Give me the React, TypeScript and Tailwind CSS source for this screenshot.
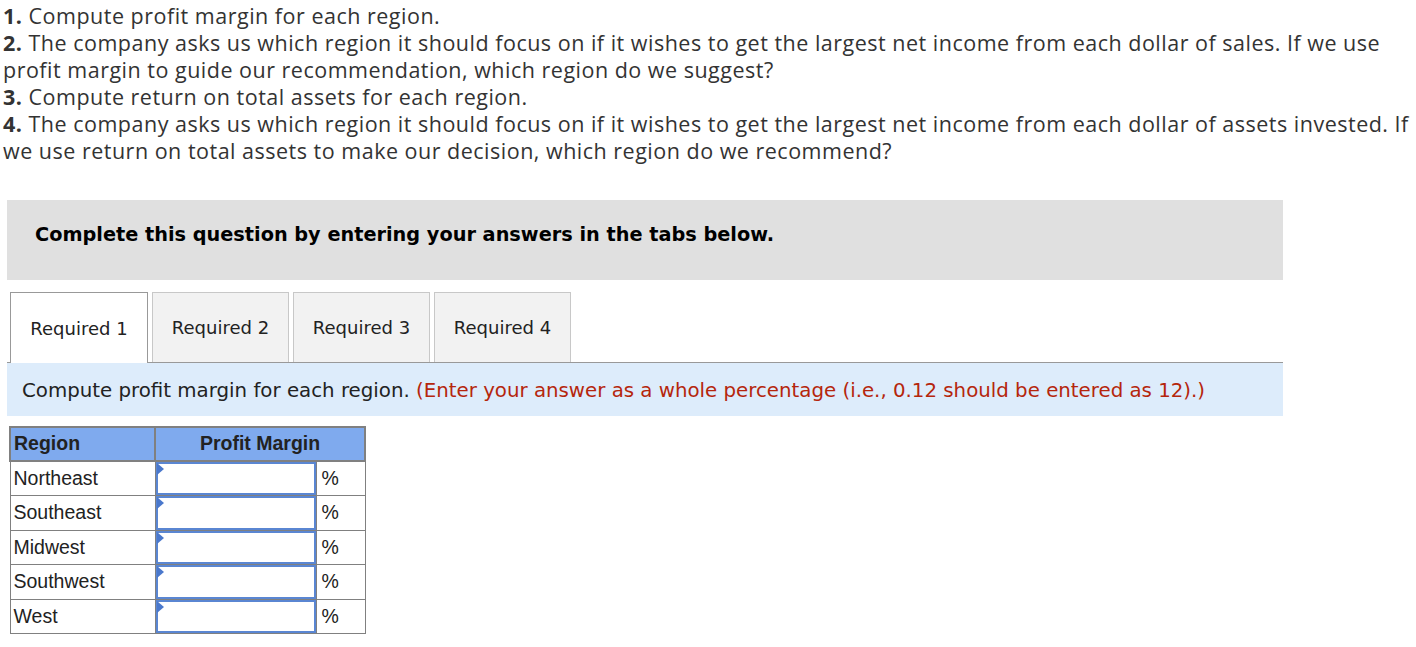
import React from "react";

const rows = ["Northeast", "Southeast", "Midwest", "Southwest", "West"];
const tabs = ["Required 1", "Required 2", "Required 3", "Required 4"];

export default function App() {
  return (
    <div className="w-[1416px] h-[647px] bg-white overflow-hidden">
      <div
        className="w-[1416px] pl-[3px] pt-[2px] text-[21.5px] tracking-[0.5px] leading-[27px] text-[#333]"
        style={{ fontFamily: '"Open Sans", sans-serif' }}
      >
        <div>
          <b>1.</b> Compute profit margin for each region.
        </div>
        <div>
          <b>2.</b> The company asks us which region it should focus on if it wishes to get the largest net income from each dollar of sales. If we use profit margin to guide our recommendation, which region do we suggest?
        </div>
        <div>
          <b>3.</b> Compute return on total assets for each region.
        </div>
        <div>
          <b>4.</b> The company asks us which region it should focus on if it wishes to get the largest net income from each dollar of assets invested. If we use return on total assets to make our decision, which region do we recommend?
        </div>
      </div>

      <div className="ml-[7px] w-[1276px] mt-[36px]" style={{ fontFamily: '"DejaVu Sans", Verdana, sans-serif' }}>
        <div className="h-[80px] bg-[#e0e0e0] flex items-center pl-[28px] pb-[10px] text-[19.3px] font-bold text-black">
          Complete this question by entering your answers in the tabs below.
        </div>

        <div className="mt-[12px] flex gap-[4px] pl-[3px] border-b border-[#999] h-[71px]">
          {tabs.map((t, i) => (
            <div
              key={t}
              className={
                i === 0
                  ? "w-[138px] h-[71px] bg-white border border-b-0 border-[#999] flex items-center justify-center text-[18px] text-[#222]"
                  : "w-[137px] h-[70px] bg-[#f2f2f2] border border-b-0 border-[#c8c8c8] flex items-center justify-center text-[18px] text-[#222]"
              }
            >
              {t}
            </div>
          ))}
        </div>

        <div className="h-[53px] bg-[#ddecfb] flex items-center pl-[15px] pt-[2px] text-[19.8px] text-[#222]">
          Compute profit margin for each region.&nbsp;
          <span className="text-[#b5260c]">
            (Enter your answer as a whole percentage (i.e., 0.12 should be entered as 12).)
          </span>
        </div>
      </div>

      <table
        className="ml-[9px] mt-[10px] border-collapse text-[19.5px] text-[#222]"
        style={{ fontFamily: '"Liberation Sans", Arial, sans-serif' }}
      >
        <thead>
          <tr className="bg-[#7faaee] h-[34px]">
            <th className="w-[145px] border-2 border-[#808080] text-left pl-[3px] font-bold">Region</th>
            <th colSpan={2} className="border-2 border-[#808080] font-bold text-center">
              Profit Margin
            </th>
          </tr>
        </thead>
        <tbody>
          {rows.map((r) => (
            <tr key={r} className="h-[34.6px]">
              <td className="w-[145px] border border-[#808080] pl-[3px] leading-none">{r}</td>
              <td className="w-[161px] border border-[#808080] p-0 relative">
                <div className="absolute inset-0 border-2 border-[#5a86d2]">
                  <div className="absolute -left-[1px] -top-[1px] w-0 h-0 border-t-[6px] border-b-[6px] border-l-[7px] border-t-transparent border-b-transparent border-l-[#4a78cc]" />
                </div>
              </td>
              <td className="w-[49px] border border-[#808080] pl-[5px] leading-none">%</td>
            </tr>
          ))}
        </tbody>
      </table>
    </div>
  );
}
